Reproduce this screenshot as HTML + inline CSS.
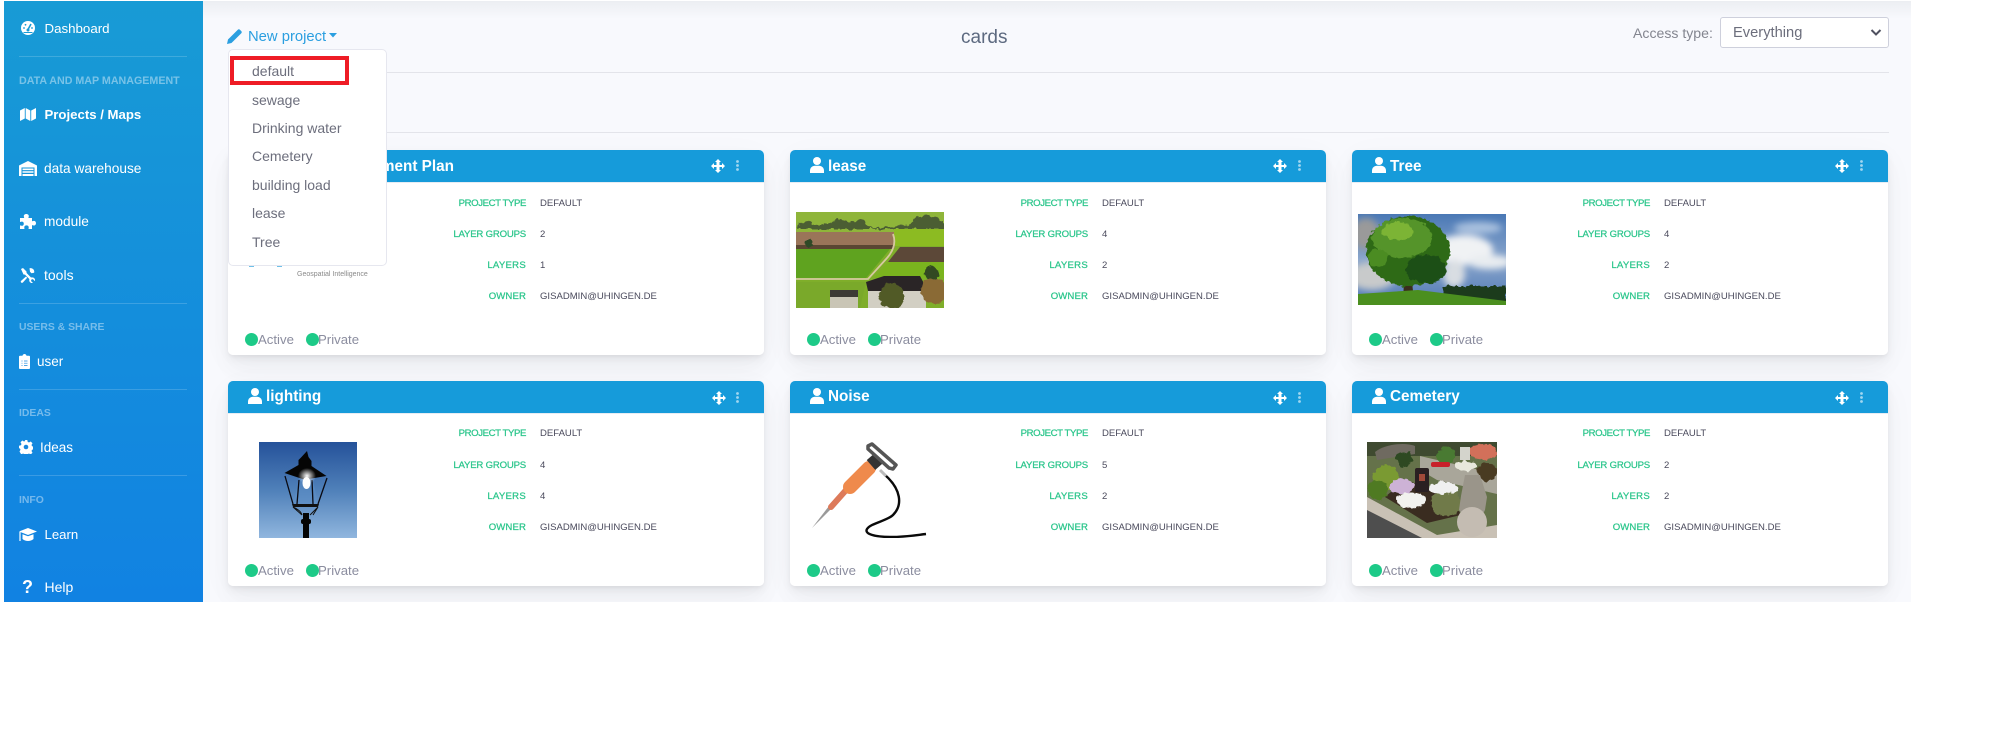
<!DOCTYPE html>
<html><head><meta charset="utf-8"><title>cards</title>
<style>
html,body{margin:0;padding:0;background:#fff;width:2000px;height:748px;overflow:hidden;font-family:"Liberation Sans",sans-serif}
*{box-sizing:border-box}
.a,.a *{position:absolute;white-space:nowrap}
#side{left:4px;top:1px;width:199px;height:601px;background:linear-gradient(180deg,#189bd5 0%,#1182e2 100%);overflow:hidden}
.ln{left:15px;width:168px;height:1px;background:rgba(255,255,255,.17)}
.sec{left:15px;font-size:10.7px;line-height:12px;font-weight:bold;color:rgba(255,255,255,.42)}
.it{font-size:14px;line-height:18px;color:#fff}
#main{left:203px;top:1px;width:1708px;height:601px;overflow:hidden;background:linear-gradient(180deg,#eceef2 0,#f8f9fd 18px,#f8f9fd 100%)}
.hr{left:25px;width:1661px;height:1px;background:#e3e4ea}
.card{width:536px;height:205px;background:#fff;border-radius:5px;overflow:hidden}
.cw{width:536px;height:205px;border-radius:5px;box-shadow:0 7.5px 35px rgba(4,9,20,.03),0 15px 22.5px rgba(4,9,20,.03),0 4px 8.5px rgba(4,9,20,.05),0 2px 3px rgba(4,9,20,.03)}
.h{left:0;top:0;width:536px;height:33px;background:#169bda;border-bottom:1px solid #e6ecf3}
.t{left:38px;top:8px;font-size:15.3px;line-height:18px;font-weight:bold;color:#fff}
.r2 .t{top:7px}
.l{right:238px;font-size:9.6px;line-height:14px;letter-spacing:-.4px;color:#2cc68c;-webkit-text-stroke:.25px #2cc68c}
.l.g{letter-spacing:-.2px}
.l.s2{letter-spacing:.25px}
.l.o{letter-spacing:.1px}
.v{left:312px;font-size:9.55px;line-height:14px;color:#4a4a5c}
.dot{width:13px;height:13px;border-radius:50%;background:#1dca88;top:183px}
.s{top:182px;font-size:13.2px;line-height:16px;color:#8b8d9f}
.dd{font-size:14px;line-height:18px;color:#6c6e7c;left:49px}
</style></head><body>
<svg width="0" height="0" style="position:absolute"><defs>
<g id="u"><circle cx="7" cy="4" r="4" fill="#fff"/><path d="M0 16v-2.2C0 10.7 2.4 8.8 5 8.8h4c2.6 0 5 1.900 5 5V16z" fill="#fff"/></g>
<g id="m" fill="#fff"><path d="M7 0l3 3H8.500v3H11V4l3 3-3 3V8H8.500v3H10l-3 3-3-3h1.500V8H3v2L0 7l3-3v2h2.500V3H4z"/></g>
<g id="d" fill="#fff" fill-opacity=".6"><circle cx="1.500" cy="1.500" r="1.400"/><circle cx="1.500" cy="5.500" r="1.400"/><circle cx="1.500" cy="9.500" r="1.400"/></g>
<filter id="rough" x="-10%" y="-10%" width="120%" height="120%"><feTurbulence type="fractalNoise" baseFrequency=".18" numOctaves="2" seed="4"/><feDisplacementMap in="SourceGraphic" scale="6" xChannelSelector="R" yChannelSelector="G"/></filter>
</defs></svg>

<div class="a" id="side">
<svg style="left:17px;top:20px" width="14" height="14" viewBox="0 0 14 14"><circle cx="7" cy="7" r="7" fill="#fff"/><path d="M7 8.500L10 3" stroke="#189bd5" stroke-width="1.600"/><circle cx="7" cy="9" r="1.500" fill="#189bd5"/><circle cx="3" cy="7" r=".9" fill="#189bd5"/><circle cx="4.500" cy="3.800" r=".9" fill="#189bd5"/><circle cx="11" cy="7" r=".9" fill="#189bd5"/><path d="M2.500 11.500h9" stroke="#189bd5" stroke-width="1"/></svg>
<span class="it" style="left:40.500px;top:19px;font-size:13.3px">Dashboard</span>
<div class="ln" style="top:55px"></div>
<span class="sec" style="top:74px">DATA AND MAP MANAGEMENT</span>
<svg style="left:16px;top:107px" width="16" height="13" viewBox="0 0 16 13"><path d="M0 2.500L4.800 0v10.500L0 13zM5.700 0l4.600 2.500V13L5.700 10.500zM11.200 2.500L16 0v10.500L11.200 13z" fill="#fff"/></svg>
<span class="it" style="left:40.500px;top:105px;font-size:13.2px;font-weight:bold">Projects / Maps</span>
<svg style="left:15px;top:160px" width="18" height="15" viewBox="0 0 18 15"><path d="M0 15V4.500L9 0l9 4.500V15h-2.500V6.500h-13V15z" fill="#fff"/><path d="M3.500 7.500h11v1.600h-11zM3.500 10.200h11v1.600h-11zM3.500 13h11V15h-11z" fill="#fff"/></svg>
<span class="it" style="left:40px;top:159px;font-size:13.7px">data warehouse</span>
<svg style="left:16px;top:213px" width="16" height="15" viewBox="0 0 16 15"><path d="M0 4h4.200C4 3 3.800 2.600 3.800 2 3.800 .8 5 0 6.300 0s2.500 .8 2.500 2c0 .6-.2 1-.4 2H12v3.300c1-.2 1.400-.4 2-.4 1.100 0 2 1 2 2.300s-.9 2.300-2 2.300c-.6 0-1-.2-2-.4V15H8.500c.2-1 .2-1.300 .2-1.800 0-1-.9-1.800-2.200-1.800s-2.200.8-2.200 1.800c0 .5 0 .8 .2 1.800H0v-3.600c1 .2 1.400 .4 1.900 .4C3 11.800 3.800 11 3.800 9.700S3 7.600 1.900 7.600c-.5 0-.9 .2-1.900 .4z" fill="#fff"/></svg>
<span class="it" style="left:40px;top:212px;font-size:13.7px">module</span>
<svg style="left:16px;top:267px" width="15" height="15" viewBox="0 0 15 15"><path d="M1 1l2-1 3.500 3.500 .1 1.500L11 9.500c1.500-.4 2.600 0 3.300 .8.8.9 1 2 .6 2.800l-2-2-1.500.4-.4 1.500 2 2c-1 .4-2 .2-2.900-.7-.8-.8-1.100-1.900-.7-3.200L5 6.600 3.500 6.500zM9.500 .4c1.500-.6 3 0 3.800 .9.800 .9 1.200 2.200 .8 3.500L11.500 5.200 10 3.800zM6 8.500L1.200 12.700c-.6.600-.6 1.300-.1 1.800s1.300.5 1.800 0L7.200 9.700z" fill="#fff"/></svg>
<span class="it" style="left:40px;top:265px">tools</span>
<div class="ln" style="top:302px"></div>
<span class="sec" style="top:321px;font-size:10.4px">USERS &amp; SHARE</span>
<svg style="left:15px;top:353px" width="11" height="15" viewBox="0 0 11 15"><path d="M1 1.800h2.500C3.700 .7 4.500 0 5.500 0s1.800 .7 2 1.800H10c.6 0 1 .4 1 1V14c0 .6-.4 1-1 1H1c-.6 0-1-.4-1-1V2.800c0-.6 .4-1 1-1z" fill="#fff"/><path d="M2.500 7h1M5 7h3.500M2.500 9.200h1M5 9.200h3.500M2.500 11.400h1M5 11.400h3.500" stroke="#1689df" stroke-width=".7"/></svg>
<span class="it" style="left:33px;top:352px;font-size:13.5px">user</span>
<div class="ln" style="top:388px"></div>
<span class="sec" style="top:407px;font-size:10.4px">IDEAS</span>
<svg style="left:15px;top:439px" width="14" height="14" viewBox="0 0 14 14"><path d="M5.700 0h2.600l.4 1.900 1.300.6 1.700-1 1.800 1.800-1 1.700.6 1.300 1.900.4v2.600l-1.900.4-.6 1.300 1 1.700-1.800 1.800-1.700-1-1.300.6-.4 1.900H5.700l-.4-1.900-1.300-.6-1.700 1L.5 11.500l1-1.700-.6-1.300L0 8.300V5.700l1.900-.4 .6-1.300-1-1.700L3.300 .5l1.700 1 1.300-.6z" fill="#fff"/><circle cx="7" cy="7" r="2.300" fill="#1587df"/></svg>
<span class="it" style="left:36px;top:438px;font-size:13.5px">Ideas</span>
<div class="ln" style="top:474px"></div>
<span class="sec" style="top:494px;font-size:10.4px">INFO</span>
<svg style="left:15px;top:527px" width="18" height="14" viewBox="0 0 18 14"><path d="M9 0l9 3.500-9 3.500L0 3.500z" fill="#fff"/><path d="M3.500 6.200L9 8.300l5.500-2.100V11c-1.500 1.300-3.500 2-5.500 2s-4-.7-5.500-2z" fill="#fff"/><path d="M1 4v9" stroke="#fff" stroke-width="1.200"/></svg>
<span class="it" style="left:40.500px;top:525px;font-size:13.2px">Learn</span>
<span class="it" style="left:18px;top:577px;font-size:18px;font-weight:bold">?</span>
<span class="it" style="left:40.500px;top:577px">Help</span>
</div>

<div class="a" id="main">
<div class="hr" style="top:71px"></div>
<div class="hr" style="top:131px"></div>
<span style="left:758px;top:25px;font-size:19px;line-height:24px;color:#5d6a80">cards</span>
<span style="left:1430px;top:23px;font-size:14.1px;line-height:18px;color:#83858f">Access type:</span>
<div style="left:1517px;top:16px;width:169px;height:31px;background:#fff;border:1px solid #ced0dc;border-radius:3px"></div>
<span style="left:1530px;top:23px;font-size:14.7px;line-height:18px;color:#6c6e7c">Everything</span>
<svg style="left:1667px;top:27px" width="12" height="9" viewBox="0 0 12 9"><path d="M1.500 2l4.500 4.500L10.500 2" fill="none" stroke="#4f5160" stroke-width="2"/></svg>

<div style="left:25px;top:149px" class="cw"></div><div style="left:587px;top:149px" class="cw"></div><div style="left:1149px;top:149px" class="cw"></div>
<div style="left:25px;top:380px" class="cw"></div><div style="left:587px;top:380px" class="cw"></div><div style="left:1149px;top:380px" class="cw"></div>

<!-- card 1 -->
<div class="card" style="left:25px;top:149px">
<div class="h"></div><span class="t" style="left:auto;right:310px">Land Development Plan</span>
<svg style="left:483px;top:9px" width="14" height="14"><use href="#m"/></svg><svg style="left:508px;top:10px" width="3" height="11"><use href="#d"/></svg>
<span class="l" style="top:47px">PROJECT TYPE</span><span class="v" style="top:47px">DEFAULT</span>
<span class="l g" style="top:78px">LAYER GROUPS</span><span class="v" style="top:78px">2</span>
<span class="l s2" style="top:109px">LAYERS</span><span class="v" style="top:109px">1</span>
<span class="l o" style="top:140px">OWNER</span><span class="v" style="top:140px">GISADMIN@UHINGEN.DE</span>
<span style="left:69px;top:120px;font-size:7px;line-height:9px;color:#8a8a8a">Geospatial Intelligence</span>
<i style="left:21px;top:115px;width:5px;height:2px;background:#6fc0e8"></i><i style="left:49px;top:115px;width:5px;height:2px;background:#6fc0e8"></i>
<i class="dot" style="left:17px"></i><span class="s" style="left:30px">Active</span><i class="dot" style="left:78px"></i><span class="s" style="left:90px">Private</span>
</div>
<!-- card 2 -->
<div class="card" style="left:587px;top:149px">
<div class="h"></div><svg style="left:20px;top:7px" width="14" height="16"><use href="#u"/></svg><span class="t">lease</span>
<svg style="left:483px;top:9px" width="14" height="14"><use href="#m"/></svg><svg style="left:508px;top:10px" width="3" height="11"><use href="#d"/></svg>
<span class="l" style="top:47px">PROJECT TYPE</span><span class="v" style="top:47px">DEFAULT</span>
<span class="l g" style="top:78px">LAYER GROUPS</span><span class="v" style="top:78px">4</span>
<span class="l s2" style="top:109px">LAYERS</span><span class="v" style="top:109px">2</span>
<span class="l o" style="top:140px">OWNER</span><span class="v" style="top:140px">GISADMIN@UHINGEN.DE</span>
<svg style="left:6px;top:62px" width="148" height="96" viewBox="0 0 148 96">
<rect width="148" height="96" fill="#7fae2a"/>
<rect width="148" height="20" fill="#8fb53a"/>
<path d="M0 16l4-5 8-2 8 4 14-2 8-4 12 3 12-2 8 8 40-3 6-8 14-2 14 6v8H0z" fill="#3f4f33" filter="url(#rough)" opacity=".85"/>
<path d="M0 20h98l2 12-2 5H0z" fill="#9a7559"/>
<path d="M0 33h98v4H0z" fill="#5a4632"/>
<path d="M98 17h50v17h-50z" fill="#8cbb22"/>
<path d="M104 35h44v15H92z" fill="#5c4838"/>
<path d="M0 37h94L70 66H0z" fill="#5fa31f"/>
<path d="M92 50h56v16H78z" fill="#7ab41e"/>
<path d="M0 70h70l-6 26H0z" fill="#7aa92a"/>
<path d="M97 22c3 8 1 16-6 24L72 67H0" fill="none" stroke="#d6c9a0" stroke-width="1.800"/>
<path d="M70 70l18-6h36l8 15H72z" fill="#2a2526"/>
<path d="M72 79h58v17H72z" fill="#d2cfc3"/>
<path d="M34 78h28v7H34z" fill="#3d3a35"/><path d="M34 85h28v11H34z" fill="#c9c5b5"/>
<g filter="url(#rough)"><circle cx="96" cy="84" r="13" fill="#515a26"/><circle cx="138" cy="78" r="13" fill="#8a6a34"/><circle cx="135" cy="61" r="7" fill="#304a22"/><circle cx="13" cy="32" r="4" fill="#2f4a25"/></g>
</svg>
<i class="dot" style="left:17px"></i><span class="s" style="left:30px">Active</span><i class="dot" style="left:78px"></i><span class="s" style="left:90px">Private</span>
</div>
<!-- card 3 -->
<div class="card" style="left:1149px;top:149px">
<div class="h"></div><svg style="left:20px;top:7px" width="14" height="16"><use href="#u"/></svg><span class="t">Tree</span>
<svg style="left:483px;top:9px" width="14" height="14"><use href="#m"/></svg><svg style="left:508px;top:10px" width="3" height="11"><use href="#d"/></svg>
<span class="l" style="top:47px">PROJECT TYPE</span><span class="v" style="top:47px">DEFAULT</span>
<span class="l g" style="top:78px">LAYER GROUPS</span><span class="v" style="top:78px">4</span>
<span class="l s2" style="top:109px">LAYERS</span><span class="v" style="top:109px">2</span>
<span class="l o" style="top:140px">OWNER</span><span class="v" style="top:140px">GISADMIN@UHINGEN.DE</span>
<svg style="left:6px;top:64px" width="148" height="91" viewBox="0 0 148 91">
<defs><linearGradient id="sk" x1="0" y1="0" x2="0" y2="1"><stop offset="0" stop-color="#4a78b5"/><stop offset=".5" stop-color="#8aa6cc"/><stop offset="1" stop-color="#4f78b5"/></linearGradient><filter id="b"><feGaussianBlur stdDeviation="3.500"/></filter></defs>
<rect width="148" height="91" fill="url(#sk)"/>
<g filter="url(#b)"><ellipse cx="105" cy="36" rx="30" ry="15" fill="#f0f2f4"/><ellipse cx="14" cy="62" rx="24" ry="14" fill="#c8cacb"/><ellipse cx="132" cy="48" rx="22" ry="7" fill="#e8ecf0"/><ellipse cx="96" cy="60" rx="11" ry="14" fill="#d8dde2"/><ellipse cx="8" cy="20" rx="14" ry="16" fill="#9a9a9a"/><ellipse cx="120" cy="14" rx="24" ry="6" fill="#a8c0de"/></g>
<path d="M46 68h8l2 18h-11z" fill="#3a2e1c"/>
<path d="M84 72h64v16H84z" fill="#1f3a1e" filter="url(#rough)"/>
<path d="M0 80l60-4 88 11v4H0z" fill="#4b8f1f"/>
<g filter="url(#rough)"><ellipse cx="50" cy="37" rx="42" ry="35" fill="#2f6a17"/>
<ellipse cx="44" cy="24" rx="30" ry="20" fill="#55942a"/><ellipse cx="40" cy="17" rx="15" ry="9" fill="#7cb436"/><ellipse cx="68" cy="55" rx="20" ry="14" fill="#1f4f12"/><ellipse cx="20" cy="44" rx="10" ry="9" fill="#4c8c24"/></g>
</svg>
<i class="dot" style="left:17px"></i><span class="s" style="left:30px">Active</span><i class="dot" style="left:78px"></i><span class="s" style="left:90px">Private</span>
</div>
<!-- card 4 -->
<div class="card r2" style="left:25px;top:380px">
<div class="h"></div><svg style="left:20px;top:7px" width="14" height="16"><use href="#u"/></svg><span class="t">lighting</span>
<svg style="left:484px;top:10px" width="14" height="14"><use href="#m"/></svg><svg style="left:508px;top:11px" width="3" height="11"><use href="#d"/></svg>
<span class="l" style="top:46px">PROJECT TYPE</span><span class="v" style="top:46px">DEFAULT</span>
<span class="l g" style="top:78px">LAYER GROUPS</span><span class="v" style="top:78px">4</span>
<span class="l s2" style="top:109px">LAYERS</span><span class="v" style="top:109px">4</span>
<span class="l o" style="top:140px">OWNER</span><span class="v" style="top:140px">GISADMIN@UHINGEN.DE</span>
<svg style="left:31px;top:61px" width="98" height="96" viewBox="259 442 98 96">
<defs><linearGradient id="lp" x1="0" y1="0" x2="0" y2="1"><stop offset="0" stop-color="#25529a"/><stop offset=".5" stop-color="#4f80b9"/><stop offset="1" stop-color="#90b6de"/></linearGradient><radialGradient id="gl"><stop offset="0" stop-color="#fff"/><stop offset="1" stop-color="#fff" stop-opacity="0"/></radialGradient></defs>
<rect x="259" y="442" width="98" height="96" fill="url(#lp)"/>
<path d="M307 451l1.500 6 3 4v5l15 10-18 3h-6l-18-6 14-8v-5l3-3z" fill="#050505"/>
<path d="M299 480h14l5 24h-25z" fill="#5d8fc8" opacity=".5"/>
<path d="M285 476l8 28M327 478l-9 26M299 480l-2 24M312 480l1 24" stroke="#0a0a12" stroke-width="1.300" fill="none"/>
<path d="M292 504h27l-1 3h-25z" fill="#111"/><path d="M293 507l9 8M318 507l-8 8M293 507c4 2 8 4 9 8M318 507l-5 8" stroke="#111" fill="none"/>
<rect x="303" y="513" width="6" height="25" fill="#050505"/><rect x="301" y="519" width="10" height="5" rx="2" fill="#050505"/>
<ellipse cx="307" cy="476" rx="9" ry="8" fill="url(#gl)"/><ellipse cx="306.500" cy="483" rx="4" ry="6" fill="#fff"/>
</svg>
<i class="dot" style="left:17px"></i><span class="s" style="left:30px">Active</span><i class="dot" style="left:78px"></i><span class="s" style="left:90px">Private</span>
</div>
<!-- card 5 -->
<div class="card r2" style="left:587px;top:380px">
<div class="h"></div><svg style="left:20px;top:7px" width="14" height="16"><use href="#u"/></svg><span class="t">Noise</span>
<svg style="left:483px;top:10px" width="14" height="14"><use href="#m"/></svg><svg style="left:508px;top:11px" width="3" height="11"><use href="#d"/></svg>
<span class="l" style="top:46px">PROJECT TYPE</span><span class="v" style="top:46px">DEFAULT</span>
<span class="l g" style="top:78px">LAYER GROUPS</span><span class="v" style="top:78px">5</span>
<span class="l s2" style="top:109px">LAYERS</span><span class="v" style="top:109px">2</span>
<span class="l o" style="top:140px">OWNER</span><span class="v" style="top:140px">GISADMIN@UHINGEN.DE</span>
<svg style="left:20px;top:61px" width="118" height="96" viewBox="810 442 118 96">
<path d="M885 475c16 14 18 30 8 40-6 6-22 8-26 14-3 5 8 8 24 8 14 0 26-2 35-3" fill="none" stroke="#0a0a0a" stroke-width="2.400"/>
<path d="M812 528l17-22 3 2z" fill="#9a9a9a"/>
<path d="M831 507l16-18" stroke="#dd7a5a" stroke-width="6" stroke-linecap="round"/>
<path d="M850 487l19-19" stroke="#ef8a4c" stroke-width="14" stroke-linecap="round"/>
<path d="M871 465l8-7" stroke="#333" stroke-width="13"/>
<path d="M868 446l4-2 24 21-3 4-4-1-21-19z" fill="none" stroke="#555" stroke-width="3.500" stroke-linejoin="round"/>
<path d="M880 470l6 6" stroke="#bbb" stroke-width="3"/>
</svg>
<i class="dot" style="left:17px"></i><span class="s" style="left:30px">Active</span><i class="dot" style="left:78px"></i><span class="s" style="left:90px">Private</span>
</div>
<!-- card 6 -->
<div class="card r2" style="left:1149px;top:380px">
<div class="h"></div><svg style="left:20px;top:7px" width="14" height="16"><use href="#u"/></svg><span class="t">Cemetery</span>
<svg style="left:483px;top:10px" width="14" height="14"><use href="#m"/></svg><svg style="left:508px;top:11px" width="3" height="11"><use href="#d"/></svg>
<span class="l" style="top:46px">PROJECT TYPE</span><span class="v" style="top:46px">DEFAULT</span>
<span class="l g" style="top:78px">LAYER GROUPS</span><span class="v" style="top:78px">2</span>
<span class="l s2" style="top:109px">LAYERS</span><span class="v" style="top:109px">2</span>
<span class="l o" style="top:140px">OWNER</span><span class="v" style="top:140px">GISADMIN@UHINGEN.DE</span>
<svg style="left:15px;top:61px" width="130" height="96" viewBox="1367 442 130 96">
<rect x="1367" y="442" width="130" height="96" fill="#65724a"/>
<rect x="1367" y="442" width="130" height="14" fill="#3f4a30"/>
<path d="M1375 452c10-8 30-10 40-6v8l-38 6z" fill="#6f6a60"/>
<path d="M1420 456l77 18v20l-60-14-17-10z" fill="#a9a69a"/>
<path d="M1367 497l70 38 60-10v13h-130z" fill="#c9c1b5"/><path d="M1367 510l55 28h-55z" fill="#4e4e4e"/>
<path d="M1385 497l42 26 34-8-10-20-46-15z" fill="#3a2c20"/>
<g filter="url(#rough)"><circle cx="1404" cy="459" r="8" fill="#2d4a22"/><circle cx="1446" cy="456" r="9" fill="#4a7a30"/>
<circle cx="1386" cy="478" r="13" fill="#7a9a30"/><circle cx="1378" cy="490" r="10" fill="#4f7a24"/>
<ellipse cx="1402" cy="486" rx="12" ry="8" fill="#cdb2d6"/><ellipse cx="1411" cy="500" rx="14" ry="8" fill="#f2f2ee"/>
<ellipse cx="1446" cy="503" rx="15" ry="13" fill="#6f7a4a"/><ellipse cx="1444" cy="488" rx="15" ry="6" fill="#f0f0f0"/>
<ellipse cx="1466" cy="466" rx="11" ry="5" fill="#e8e8dc"/>
<ellipse cx="1483" cy="452" rx="14" ry="8" fill="#d2705a"/><ellipse cx="1487" cy="472" rx="10" ry="9" fill="#4a3a22"/></g>
<rect x="1415" y="468" width="14" height="24" rx="2" fill="#2a2022"/><rect x="1419" y="474" width="6" height="7" fill="#a04a3a"/>
<rect x="1431" y="462" width="19" height="5" rx="2" fill="#c8202a"/><rect x="1460" y="447" width="10" height="13" fill="#d4d4cc"/>
<path d="M1465 475h15l7 22-2 13-4 8h-16l-6-8 2-14z" fill="#9a958a"/>
<circle cx="1472" cy="522" r="15" fill="#c4bcb2"/>
</svg>
<i class="dot" style="left:17px"></i><span class="s" style="left:30px">Active</span><i class="dot" style="left:78px"></i><span class="s" style="left:90px">Private</span>
</div>

<svg style="left:24px;top:28px" width="15" height="15" viewBox="0 0 15 15"><path d="M0 15l1-4.500L10.800 .7c.6-.6 1.500-.6 2.100 0l1.400 1.400c.6 .6 .6 1.500 0 2.100L4.500 14z" fill="#2b9fe0"/></svg>
<span style="left:45px;top:27px;font-size:14.8px;line-height:18px;color:#2b9fe0">New project</span>
<svg style="left:126px;top:32px" width="8" height="5"><path d="M0 0h8L4 4.500z" fill="#2b9fe0"/></svg>

<div style="left:25px;top:48px;width:159px;height:217px;background:#fff;border:1px solid #e6e7ef;border-radius:5px"></div>
<div style="left:27px;top:55px;width:119px;height:29px;border:4.500px solid #ee1c25;background:#fff"></div>
<span class="dd" style="top:61px">default</span>
<span class="dd" style="top:90px">sewage</span>
<span class="dd" style="top:118px">Drinking water</span>
<span class="dd" style="top:146px">Cemetery</span>
<span class="dd" style="top:175px">building load</span>
<span class="dd" style="top:203px">lease</span>
<span class="dd" style="top:232px">Tree</span>
</div>
</body></html>
